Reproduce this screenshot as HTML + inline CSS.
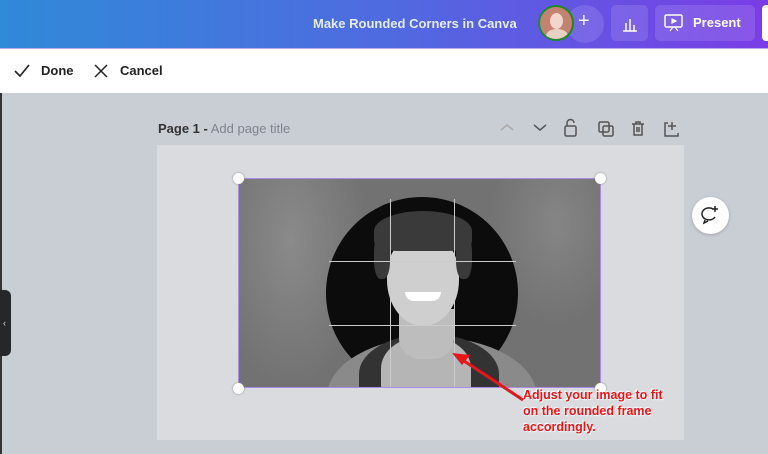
<!DOCTYPE html>
<html><head><style>
*{margin:0;padding:0;box-sizing:border-box}
body{width:768px;height:454px;overflow:hidden;background:#c9cdd4;font-family:"Liberation Sans",sans-serif;position:relative}
.top{position:absolute;left:0;top:0;width:768px;height:48px;background:linear-gradient(90deg,#2f8ad8 0%,#4f6be0 50%,#7a3de6 100%)}
.ab{position:absolute}
.tb{position:absolute;left:0;top:48px;width:768px;height:45px;background:#fff;border-top:1px solid #b9a9e8}
</style></head><body>
<div class="top">
<div class="ab" style="left:313px;top:16px;color:#e6ecff;font-size:13px;font-weight:bold">Make Rounded Corners in Canva</div>
<div class="ab" style="left:566px;top:5px;width:38px;height:38px;border-radius:50%;background:rgba(255,255,255,.12)"></div>
<div class="ab" style="left:538px;top:5px;width:36px;height:36px;border-radius:50%;background:#c48270;border:2px solid #1d8a2a;overflow:hidden"><div style="position:absolute;left:10px;top:6px;width:13px;height:16px;border-radius:50%;background:#f0d6cc"></div><div style="position:absolute;left:6px;top:22px;width:22px;height:14px;border-radius:50% 50% 0 0;background:#e6d2c5"></div></div>
<div class="ab" style="left:578px;top:10px;color:#fff;font-size:20px">+</div>
<div class="ab" style="left:611px;top:5px;width:37px;height:36px;border-radius:5px;background:rgba(255,255,255,.12)"><svg width="37" height="36"><path d="M12 26h14M15 26v-8M19 26v-12M23 26v-6" stroke="#fff" stroke-width="1.5" fill="none"/></svg></div>
<div class="ab" style="left:655px;top:5px;width:100px;height:36px;border-radius:5px;background:rgba(255,255,255,.12)"><svg class="ab" style="left:8px;top:7px" width="22" height="22"><rect x="2" y="3" width="17" height="12" rx="1.5" stroke="#fff" stroke-width="1.5" fill="none"/><path d="M9 7l4 2-4 2z M10 15l-3 4M12 15l3 4" stroke="#fff" fill="#fff" stroke-width="1.2"/></svg><span class="ab" style="left:38px;top:10px;color:#fff;font-size:13px;font-weight:bold">Present</span></div>
<div class="ab" style="left:762px;top:5px;width:10px;height:36px;border-radius:4px;background:#fff"></div>
</div>
<div class="tb">
<svg class="ab" style="left:13px;top:14px" width="18" height="16"><path d="M2 8l5 5L16 2" stroke="#222" stroke-width="1.6" fill="none"/></svg>
<div class="ab" style="left:41px;top:14px;font-size:13px;font-weight:bold;color:#222">Done</div>
<svg class="ab" style="left:94px;top:15px" width="14" height="14"><path d="M1 1l12 12M13 1L1 13" stroke="#222" stroke-width="1.5"/></svg>
<div class="ab" style="left:120px;top:14px;font-size:13px;font-weight:bold;color:#222">Cancel</div>
</div>
<div class="ab" style="left:0;top:93px;width:2px;height:361px;background:#333"></div>
<div class="ab" style="left:0;top:290px;width:11px;height:66px;background:#25272b;border-radius:0 6px 6px 0"></div>
<div class="ab" style="left:3px;top:318px;color:#ddd;font-size:9px">‹</div>
<div class="ab" style="left:158px;top:121px;font-size:13px;color:#333"><b>Page 1 -</b> <span style="color:#80848c">Add page title</span></div>
<svg class="ab" style="left:495px;top:116px" width="190" height="24" fill="none" stroke="#555" stroke-width="1.5">
<path d="M6 14l6-5 6 5" stroke="#aaa"/><path d="M39 9l6 5 6-5"/>
<rect x="70" y="10" width="11" height="10" rx="1.5"/><path d="M72 10V7a3.5 3.5 0 0 1 7 0"/>
<rect x="104" y="6" width="10" height="10" rx="1.5"/><rect x="108" y="10" width="10" height="10" rx="1.5"/>
<path d="M137 8h12M141 8V6h4v2M139 8v11h8V8M142 11v5M144 11v5"/>
<path d="M173 7h-3v13h13v-3M177 6v8M173 10h8" />
</svg>
<div class="ab" style="left:157px;top:145px;width:527px;height:295px;background:#d9dbde"></div>
<div class="ab" style="left:238px;top:178px;width:363px;height:210px;background:#727272;overflow:hidden;border:1.5px solid #a98be6">
<div class="ab" style="left:0;top:0;width:130px;height:210px;background:radial-gradient(ellipse at 40% 30%,#8a8a8a,#727272 70%)"></div>
<div class="ab" style="left:250px;top:0;width:113px;height:150px;background:radial-gradient(ellipse at 60% 30%,#858585,#727272 70%)"></div>
<div class="ab" style="left:87px;top:18px;width:192px;height:192px;border-radius:50%;background:#0c0c0c"></div>
<div class="ab" style="left:88px;top:158px;width:210px;height:120px;border-radius:50% 50% 0 0;background:#8a8a8a"></div>
<div class="ab" style="left:120px;top:155px;width:140px;height:80px;border-radius:50% 50% 0 0;background:#333"></div>
<div class="ab" style="left:142px;top:158px;width:90px;height:70px;border-radius:45% 45% 0 0;background:#b5b5b5"></div>
<div class="ab" style="left:160px;top:130px;width:55px;height:50px;background:#bdbdbd;border-radius:0 0 40% 40%"></div>
<div class="ab" style="left:148px;top:55px;width:72px;height:92px;border-radius:45% 45% 50% 50%;background:#cfcfcf"></div>
<div class="ab" style="left:135px;top:32px;width:98px;height:40px;border-radius:50% 50% 25% 25%;background:#3a3a3a"></div>
<div class="ab" style="left:135px;top:55px;width:16px;height:45px;border-radius:40%;background:#3a3a3a"></div>
<div class="ab" style="left:217px;top:55px;width:16px;height:45px;border-radius:40%;background:#3a3a3a"></div>
<div class="ab" style="left:166px;top:113px;width:36px;height:9px;border-radius:0 0 12px 12px;background:#fff"></div>
<div class="ab" style="left:151px;top:20px;width:1px;height:190px;background:#ccc"></div>
<div class="ab" style="left:215px;top:20px;width:1px;height:190px;background:#ccc"></div>
<div class="ab" style="left:90px;top:82px;width:187px;height:1px;background:#ccc"></div>
<div class="ab" style="left:90px;top:146px;width:187px;height:1px;background:#ccc"></div>
</div>
<div class="ab" style="left:233px;top:173px;width:11px;height:11px;border-radius:50%;background:#fff;box-shadow:0 0 2px #888"></div>
<div class="ab" style="left:595px;top:173px;width:11px;height:11px;border-radius:50%;background:#fff;box-shadow:0 0 2px #888"></div>
<div class="ab" style="left:233px;top:383px;width:11px;height:11px;border-radius:50%;background:#fff;box-shadow:0 0 2px #888"></div>
<div class="ab" style="left:595px;top:383px;width:11px;height:11px;border-radius:50%;background:#fff;box-shadow:0 0 2px #888"></div>
<div class="ab" style="left:692px;top:197px;width:37px;height:37px;border-radius:50%;background:#fff;box-shadow:0 1px 3px rgba(0,0,0,.2)"><svg width="37" height="37" fill="none" stroke="#222" stroke-width="1.5"><path d="M21 12a7 6 0 1 0 2 8M13 23l-1 3 4-2"/><path d="M23 9v6M20 12h6"/></svg></div>
<svg class="ab" style="left:448px;top:345px" width="80" height="60"><path d="M75 55L10 12" stroke="#e8161a" stroke-width="3"/><path d="M4 8l18 2-8 10z" fill="#e8161a"/></svg>
<div class="ab" style="left:523px;top:387px;color:#e8161a;font-size:12.5px;font-weight:bold;line-height:16px;text-shadow:1px 1px 1px #fff,-1px -1px 1px #fff">Adjust your image to fit<br>on the rounded frame<br>accordingly.</div>
</body></html>
